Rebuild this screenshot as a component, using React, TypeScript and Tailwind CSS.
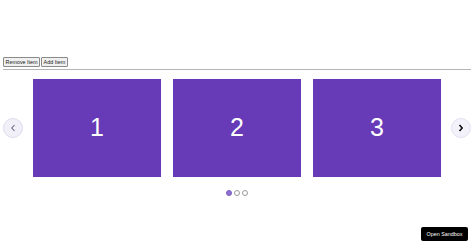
import React, { useState } from 'react';

const slides = [1, 2, 3];

export default function App() {
  const [items, setItems] = useState(slides);
  const [active] = useState(0);

  return (
    <div className="relative h-[248px] w-[474px] overflow-hidden bg-white font-['Liberation_Sans',Arial,sans-serif]">
      <div className="px-[3px] pt-[57px]">
        <div className="flex gap-[1px]">
          <button
            onClick={() => setItems(items.slice(0, -1))}
            className="h-[10px] rounded-[1px] border border-[#8a8a8a] bg-[#f0f0f0] px-[1.5px] text-[5.4px] leading-[8px] text-[#222]"
          >
            Remove Item
          </button>
          <button
            onClick={() => setItems([...items, items.length + 1])}
            className="h-[10px] rounded-[1px] border border-[#8a8a8a] bg-[#f0f0f0] px-[1.5px] text-[5.4px] leading-[8px] text-[#222]"
          >
            Add Item
          </button>
        </div>
        <div className="mt-[2px] h-px bg-[#b5b5b5]" />
      </div>

      <div className="mt-[9px] flex items-center px-[3px]">
        <button className="flex h-[20px] w-[20px] shrink-0 items-center justify-center rounded-full border border-[#e0dcef] bg-[#f1eff8] text-[#6f6a8a]">
          <svg width="6" height="8" viewBox="0 0 6 8">
            <path d="M4.5 1 L1.8 4 L4.5 7" fill="none" stroke="currentColor" strokeWidth="1.1" />
          </svg>
        </button>
        <div className="ml-[10px] flex gap-[12px]">
          {items.slice(0, 3).map((n) => (
            <div
              key={n}
              className="flex h-[98px] w-[128px] items-center justify-center bg-[#673ab7] text-[25px] font-light text-white"
            >
              {n}
            </div>
          ))}
        </div>
        <button className="ml-[10px] flex h-[20px] w-[20px] shrink-0 items-center justify-center rounded-full border border-[#e4e0f0] bg-[#f3f1fa] text-black">
          <svg width="6" height="8" viewBox="0 0 6 8">
            <path d="M1.5 1 L4.2 4 L1.5 7" fill="none" stroke="currentColor" strokeWidth="1.4" />
          </svg>
        </button>
      </div>

      <div className="mt-[13px] flex justify-center gap-[2px]">
        {[0, 1, 2].map((i) => (
          <span
            key={i}
            className={
              i === active
                ? 'h-[6px] w-[6px] rounded-full border border-[#7b5cc4] bg-[#8e72d2]'
                : 'h-[6px] w-[6px] rounded-full border border-[#9a9a9a] bg-white'
            }
          />
        ))}
      </div>

      <div className="absolute right-[6px] bottom-[7px] flex h-[14px] w-[47px] items-center justify-center rounded-[2px] bg-black text-[5.4px] text-white">
        Open Sandbox
      </div>
    </div>
  );
}
